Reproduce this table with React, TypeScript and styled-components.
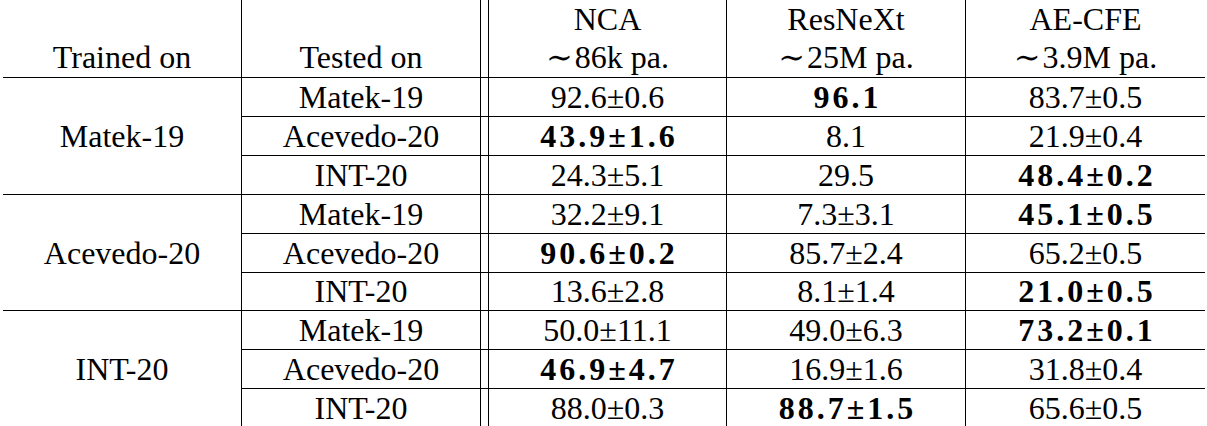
import React from "react";
import styled, { createGlobalStyle } from "styled-components";

const Global = createGlobalStyle`
  html, body { margin: 0; padding: 0; background: #fff; }
  body { font-family: "Liberation Serif", "DejaVu Serif", serif; color: #000; }
`;

const COLS = "239px 239px 7px 239px 239px 239px";

const Table = styled.div`
  display: flex;
  flex-direction: column;
  margin-left: 3px;
  width: 1202px;
  font-family: "Liberation Serif", "DejaVu Serif", serif;
  font-size: 32px;
`;

const HeaderRow = styled.div`
  display: grid;
  grid-template-columns: ${COLS};
  height: 77px;
`;

const HeadCell = styled.div<{ $right?: boolean; $left?: boolean }>`
  box-sizing: border-box;
  display: flex;
  flex-direction: column;
  align-items: center;
  justify-content: flex-end;
  line-height: 38px;
  padding-bottom: 1px;
  border-right: ${(p) => (p.$right ? "1px solid #000" : "none")};
  border-left: ${(p) => (p.$left ? "1px solid #000" : "none")};
`;

const Sim = styled.span`
  margin-right: 2px;
`;

const Group = styled.div<{ $last: number }>`
  display: grid;
  grid-template-columns: ${COLS};
  grid-template-rows: 38px 39px ${(p) => p.$last}px;
  border-top: 1px solid #000;
`;

const GroupLabel = styled.div`
  grid-row: 1 / 4;
  grid-column: 1;
  box-sizing: border-box;
  display: flex;
  align-items: center;
  justify-content: center;
  border-right: 1px solid #000;
  padding-top: 1px;
`;

const Cell = styled.div<{ $top?: boolean; $right?: boolean; $left?: boolean; $bold?: boolean }>`
  box-sizing: border-box;
  display: flex;
  align-items: center;
  justify-content: center;
  white-space: nowrap;
  border-top: ${(p) => (p.$top ? "1px solid #000" : "none")};
  border-right: ${(p) => (p.$right ? "1px solid #000" : "none")};
  border-left: ${(p) => (p.$left ? "1px solid #000" : "none")};
  font-weight: ${(p) => (p.$bold ? 700 : 400)};
  letter-spacing: ${(p) => (p.$bold ? "3px" : "0")};
  padding-left: ${(p) => (p.$bold ? "3px" : "0")};
`;

const Gap = styled.div<{ $top?: boolean }>`
  box-sizing: border-box;
  border-top: ${(p) => (p.$top ? "1px solid #000" : "none")};
`;

type Val = { v: string; b?: boolean };
type Row = { test: string; vals: [Val, Val, Val] };
type G = { train: string; last: number; rows: Row[] };

const data: G[] = [
  {
    train: "Matek-19",
    last: 39,
    rows: [
      { test: "Matek-19", vals: [{ v: "92.6±0.6" }, { v: "96.1", b: true }, { v: "83.7±0.5" }] },
      { test: "Acevedo-20", vals: [{ v: "43.9±1.6", b: true }, { v: "8.1" }, { v: "21.9±0.4" }] },
      { test: "INT-20", vals: [{ v: "24.3±5.1" }, { v: "29.5" }, { v: "48.4±0.2", b: true }] },
    ],
  },
  {
    train: "Acevedo-20",
    last: 38,
    rows: [
      { test: "Matek-19", vals: [{ v: "32.2±9.1" }, { v: "7.3±3.1" }, { v: "45.1±0.5", b: true }] },
      { test: "Acevedo-20", vals: [{ v: "90.6±0.2", b: true }, { v: "85.7±2.4" }, { v: "65.2±0.5" }] },
      { test: "INT-20", vals: [{ v: "13.6±2.8" }, { v: "8.1±1.4" }, { v: "21.0±0.5", b: true }] },
    ],
  },
  {
    train: "INT-20",
    last: 39,
    rows: [
      { test: "Matek-19", vals: [{ v: "50.0±11.1" }, { v: "49.0±6.3" }, { v: "73.2±0.1", b: true }] },
      { test: "Acevedo-20", vals: [{ v: "46.9±4.7", b: true }, { v: "16.9±1.6" }, { v: "31.8±0.4" }] },
      { test: "INT-20", vals: [{ v: "88.0±0.3" }, { v: "88.7±1.5", b: true }, { v: "65.6±0.5" }] },
    ],
  },
];

export default function App() {
  return (
    <>
      <Global />
      <Table>
        <HeaderRow>
          <HeadCell $right>
            <span>Trained on</span>
          </HeadCell>
          <HeadCell $right>
            <span>Tested on</span>
          </HeadCell>
          <Gap />
          <HeadCell $left $right>
            <span>NCA</span>
            <span>
              <Sim>∼</Sim>86k pa.
            </span>
          </HeadCell>
          <HeadCell $right>
            <span>ResNeXt</span>
            <span>
              <Sim>∼</Sim>25M pa.
            </span>
          </HeadCell>
          <HeadCell>
            <span>AE-CFE</span>
            <span>
              <Sim>∼</Sim>3.9M pa.
            </span>
          </HeadCell>
        </HeaderRow>
        {data.map((g) => (
          <Group key={g.train} $last={g.last}>
            <GroupLabel>{g.train}</GroupLabel>
            {g.rows.map((r, i) => (
              <React.Fragment key={r.test}>
                <Cell $top={i > 0} $right>
                  {r.test}
                </Cell>
                <Gap $top={i > 0} />
                <Cell $top={i > 0} $left $right $bold={r.vals[0].b}>
                  {r.vals[0].v}
                </Cell>
                <Cell $top={i > 0} $right $bold={r.vals[1].b}>
                  {r.vals[1].v}
                </Cell>
                <Cell $top={i > 0} $bold={r.vals[2].b}>
                  {r.vals[2].v}
                </Cell>
              </React.Fragment>
            ))}
          </Group>
        ))}
      </Table>
    </>
  );
}
